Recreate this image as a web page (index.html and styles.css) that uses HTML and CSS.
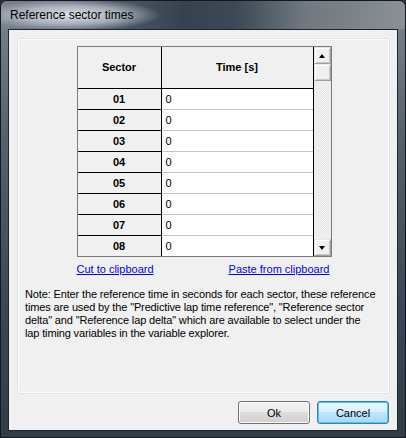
FILE: index.html
```html
<!DOCTYPE html>
<html lang="en">
<head>
<meta charset="UTF-8">
<title>Reference sector times</title>
<link rel="stylesheet" href="styles.css">
</head>
<body>
<div class="window">
  <div class="titlebar">Reference sector times</div>
  <div class="client">
    <div class="panel">
      <div class="grid">
        <div class="cells">
          <div class="row head"><div class="sec">Sector</div><div class="time">Time [s]</div></div>
          <div class="row"><div class="sec">01</div><div class="time">0</div></div>
          <div class="row"><div class="sec">02</div><div class="time">0</div></div>
          <div class="row"><div class="sec">03</div><div class="time">0</div></div>
          <div class="row"><div class="sec">04</div><div class="time">0</div></div>
          <div class="row"><div class="sec">05</div><div class="time">0</div></div>
          <div class="row"><div class="sec">06</div><div class="time">0</div></div>
          <div class="row"><div class="sec">07</div><div class="time">0</div></div>
          <div class="row last"><div class="sec">08</div><div class="time">0</div></div>
        </div>
        <div class="scroll">
          <div class="sbtn"><span class="arrow up"></span></div>
          <div class="thumb"></div>
          <div class="track"></div>
          <div class="sbtn"><span class="arrow down"></span></div>
        </div>
      </div>
      <div class="links">
        <a href="#">Cut to clipboard</a>
        <a href="#">Paste from clipboard</a>
      </div>
      <p class="note">Note: Enter the reference time in seconds for each sector, these reference<br>times are used by the "Predictive lap time reference", "Reference sector<br>delta" and "Reference lap delta" which are available to select under the<br>lap timing variables in the variable explorer.</p>
    </div>
    <div class="buttons">
      <button type="button" class="btn">Ok</button>
      <button type="button" class="btn default">Cancel</button>
    </div>
  </div>
</div>
</body>
</html>
```

FILE: styles.css
```css
html, body { margin:0; padding:0; }
body { background:#2b2f33; font-family:"Liberation Sans",Arial,sans-serif; font-size:11px; }
.window { width:406px; height:438px; box-sizing:border-box; border:1px solid #14181c; border-radius:7px 7px 0 0; background:linear-gradient(to bottom, #7d868f 0%, #56626e 30%, #3a4756 70%, #2f3c4a 100%); padding:0 7px 6px; display:flex; flex-direction:column; }
.titlebar { height:28px; margin:0 -7px; padding-left:9px; line-height:28px; font-size:12px; color:#000; border-radius:6px 6px 0 0;
  background:radial-gradient(ellipse 90px 16px at 70px 14px, rgba(225,232,238,0.95) 0%, rgba(200,208,216,0.7) 55%, rgba(200,208,216,0) 100%),
  linear-gradient(to right, #78838d 0%, #566270 22%, #36424f 45%, #3c4855 58%, #6f7880 75%, #8a9096 100%); }
.client { flex:1; border:1px solid #1d2630; background:#f0f0f0; display:flex; flex-direction:column; }
.panel { height:356px; box-sizing:border-box; margin:8px 7px 0 8px; border:1px solid #dde3e8; border-radius:3px; padding:7px 0 0 7px; box-shadow:inset 0 0 0 1px #fafbfc; }
.grid { width:255px; height:211px; box-sizing:border-box; margin:0 auto; border:1px solid #7a7a7a; display:flex; position:relative; left:-3px; }
.cells { width:235px; border-right:1px solid #000; display:flex; flex-direction:column; }
.row { display:flex; height:21px; }
.row.head { height:42px; }
.sec { width:84px; box-sizing:border-box; border-right:1px solid #000; border-bottom:1px solid #000; background:#f0f0f0; font-weight:bold; text-align:center; line-height:20px; }
.time { flex:1; box-sizing:border-box; border-bottom:1px solid #c4c4c4; background:#fff; padding-left:4px; line-height:20px; }
.head .sec, .head .time { line-height:41px; background:#f0f0f0; font-weight:bold; text-align:center; padding:0; border-bottom-color:#000; }
.row.last { height:20px; }
.row.last .sec, .row.last .time { border-bottom:none; }
.scroll { width:17px; display:flex; flex-direction:column; }
.sbtn, .thumb { height:17px; box-sizing:border-box; border:1px solid #a0a0a0; border-top-color:#e8e8e8; border-left-color:#e8e8e8; background:#f0f0f0; box-shadow:inset 1px 1px 0 #fff, inset -1px -1px 0 #c8c8c8; display:flex; align-items:center; justify-content:center; }
.track { flex:1; background:repeating-conic-gradient(#f4f4f4 0 25%, #e6e6e6 0 50%) 0 0/2px 2px; }
.arrow { width:0; height:0; border-left:3.5px solid transparent; border-right:3.5px solid transparent; }
.arrow.up { border-bottom:4px solid #000; }
.arrow.down { border-top:4px solid #000; }
.links { width:255px; margin:6px auto 0; display:flex; justify-content:space-between; line-height:13px; position:relative; left:-3px; padding-right:2px; box-sizing:border-box; }
.links a { color:#0000ff; }
.note { margin:12px 0 0 0; line-height:13px; color:#000; letter-spacing:-0.14px; white-space:nowrap; }
.buttons { display:flex; justify-content:flex-end; gap:7px; margin-top:7px; padding-right:8px; }
.btn { width:72px; height:23px; font-family:"Liberation Sans",Arial,sans-serif; font-size:11px; color:#000; border:1px solid #707070; border-radius:3px; background:linear-gradient(to bottom, #f2f2f2 0%, #ebebeb 49%, #dddddd 50%, #cfcfcf 100%); box-shadow:inset 0 0 0 1px #fbfbfb; padding:0; }
.btn.default { border-color:#3c7fb1; background:linear-gradient(to bottom, #eaf6fd 0%, #d9f0fc 49%, #bee6fd 50%, #a7d9f5 100%); box-shadow:inset 0 0 0 1px #48c6f4; }
```
